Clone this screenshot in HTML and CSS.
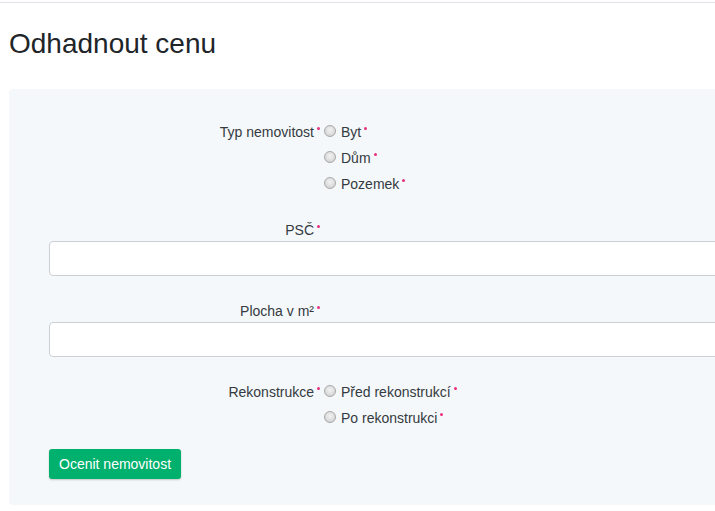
FILE: index.html
```html
<!DOCTYPE html>
<html lang="cs">
<head>
<meta charset="utf-8">
<title>Odhadnout cenu</title>
<link rel="stylesheet" href="styles.css">
</head>
<body>
<div class="topbar"></div>
<main class="page">
  <h1 class="title">Odhadnout cenu</h1>
  <form class="panel">
    <div class="field field-radio">
      <div class="label req">Typ nemovitost</div>
      <div class="options">
        <label class="option"><input type="radio" name="typ" class="radio"><span class="req">Byt</span></label>
        <label class="option"><input type="radio" name="typ" class="radio"><span class="req">Dům</span></label>
        <label class="option"><input type="radio" name="typ" class="radio"><span class="req">Pozemek</span></label>
      </div>
    </div>
    <div class="field field-text">
      <div class="label req">PSČ</div>
      <input type="text" class="input">
    </div>
    <div class="field field-text field-last-text">
      <div class="label req">Plocha v m²</div>
      <input type="text" class="input">
    </div>
    <div class="field field-radio field-end">
      <div class="label req">Rekonstrukce</div>
      <div class="options">
        <label class="option"><input type="radio" name="rek" class="radio"><span class="req">Před rekonstrukcí</span></label>
        <label class="option"><input type="radio" name="rek" class="radio"><span class="req">Po rekonstrukci</span></label>
      </div>
    </div>
    <button type="button" class="btn">Ocenit nemovitost</button>
  </form>
</main>
</body>
</html>
```

FILE: styles.css
```css
html, body {
  margin: 0;
  padding: 0;
  overflow: hidden;
  background: #ffffff;
}

body {
  font-family: "Liberation Sans", Arial, sans-serif;
  color: #343a40;
  width: 1100px;
}

.topbar {
  height: 2px;
  border-bottom: 1px solid #e3e1ec;
}

.page {
  padding: 0 0 0 9px;
}

.title {
  margin: 25px 0 29px;
  font-size: 28px;
  line-height: 32px;
  font-weight: 400;
  color: #212529;
}

.panel {
  background: #f5f8fb;
  border-radius: 4px;
  padding: 30px 40px 26px;
}

.field {
  display: grid;
  grid-template-columns: 271px 1fr;
  font-size: 14px;
}

.field-radio {
  column-gap: 4px;
  margin-bottom: 23px;
}

.field-end {
  margin-bottom: 18px;
}

.field-radio .label {
  line-height: 26px;
  text-align: right;
}

.field-text {
  margin-bottom: 25px;
}

.field-last-text {
  margin-bottom: 22px;
}

.field-text .label {
  line-height: 20px;
  text-align: right;
  margin-bottom: 1px;
}

.field-text .input {
  grid-column: 1 / -1;
}

.req::after {
  content: "";
  display: inline-block;
  width: 3px;
  height: 3px;
  border-radius: 50%;
  background: #e8317c;
  margin-left: 3px;
  vertical-align: 7px;
}

.options {
  display: flex;
  flex-direction: column;
}

.option {
  display: flex;
  align-items: center;
  height: 26px;
  line-height: 26px;
}

.radio {
  appearance: none;
  -webkit-appearance: none;
  width: 12px;
  height: 12px;
  margin: 0 5px 2px 0;
  border-radius: 50%;
  border: 1px solid #a8a8a8;
  background: radial-gradient(circle at 50% 40%, #f2f2f2 0%, #dcdcdc 60%, #c6c6c6 100%);
  box-sizing: border-box;
}

.input {
  display: block;
  height: 35px;
  box-sizing: border-box;
  border: 1px solid #ccd0d5;
  border-radius: 4px;
  background: #ffffff;
  margin: 0;
  padding: 6px 12px;
  font: inherit;
}

.btn {
  display: block;
  height: 30px;
  padding: 0 10px;
  border: 0;
  border-radius: 3px;
  background: #00b06d;
  color: #ffffff;
  font-family: "Liberation Sans", Arial, sans-serif;
  font-size: 14px;
  box-shadow: 0 1px 2px rgba(0, 0, 0, 0.2);
}
```
